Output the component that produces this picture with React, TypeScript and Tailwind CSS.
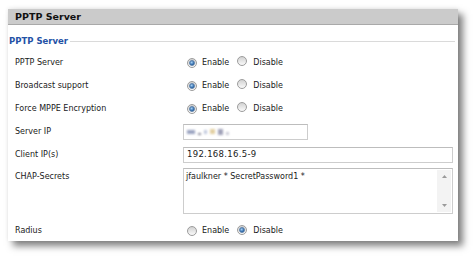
import React from "react";

const font = "font-['DejaVu_Sans',Verdana,sans-serif]";

function Radio({ checked }: { checked?: boolean }) {
  return (
    <span className="inline-flex h-[10px] w-[10px] shrink-0 items-center justify-center rounded-full border border-[#9c9c9c] bg-[linear-gradient(180deg,#d2d2d2,#fafafa)]">
      {checked && (
        <span className="h-[6px] w-[6px] rounded-full border border-[#5a7fa8] bg-[radial-gradient(circle_at_40%_35%,#a8d2f5,#1b5aa0_75%)]" />
      )}
    </span>
  );
}

function RadioPair({ enabled }: { enabled: boolean }) {
  return (
    <div className="ml-[4px] flex items-center text-[8px] leading-[10px] text-[#1a1a1a]">
      <Radio checked={enabled} />
      <span className="ml-[5px]">Enable</span>
      <span className="ml-[8px]">
        <Radio checked={!enabled} />
      </span>
      <span className="ml-[6px]">Disable</span>
    </div>
  );
}

function Row({ label, children }: { label: string; children: React.ReactNode }) {
  return (
    <div className="flex h-[23px] items-center">
      <div className="w-[168px] text-[8px] leading-[10px] text-[#1a1a1a]">{label}</div>
      {children}
    </div>
  );
}

export default function App() {
  return (
    <div className={`h-[256px] w-[474px] bg-white pl-[8px] pt-[9px] ${font}`}>
      <div className="h-[232px] w-[450px] bg-white shadow-[5px_5px_7px_rgba(0,0,0,0.5),0_-1px_4px_rgba(0,0,0,0.08)]">
        {/* title bar */}
        <div className="flex h-[16px] items-center border-b border-[#a9a9a9] bg-[#cbcbcb] pl-[7px] pt-[1px]">
          <span className="text-[9.5px] font-bold leading-none text-[#111]">PPTP Server</span>
        </div>

        {/* fieldset legend */}
        <div className="mt-[10px] flex h-[12px] items-center pl-[1px] pr-[3px]">
          <span className="text-[8.5px] font-bold leading-none text-[#2452a6]">PPTP Server</span>
          <div className="ml-[2px] h-px flex-1 bg-[#dadada]" />
        </div>

        <div className="mt-[4px] pl-[7px]">
          <Row label="PPTP Server">
            <RadioPair enabled />
          </Row>
          <Row label="Broadcast support">
            <RadioPair enabled />
          </Row>
          <Row label="Force MPPE Encryption">
            <RadioPair enabled />
          </Row>
          <Row label="Server IP">
            <div className="flex h-[16px] w-[125px] items-center gap-[3px] border border-[#cdcdcd] border-t-[#bdbdbd] bg-white pl-[3px]">
              <span className="h-[4px] w-[8px] bg-[#9aa3c0] blur-[1.3px]" />
              <span className="mt-[4px] h-[2px] w-[3px] bg-[#8a8a9a] blur-[0.8px]" />
              <span className="h-[4px] w-[3px] bg-[#c0c8dc] blur-[1px]" />
              <span className="h-[5px] w-[5px] bg-[#e2cfa2] blur-[1.3px]" />
              <span className="h-[6px] w-[5px] bg-[#a0a2b8] blur-[1.3px]" />
              <span className="mt-[3px] h-[3px] w-[3px] bg-[#c8c8d4] blur-[1px]" />
            </div>
          </Row>
          <Row label="Client IP(s)">
            <div className="flex h-[16px] w-[270px] items-center border border-[#cdcdcd] border-t-[#bdbdbd] bg-white pl-[3px] text-[8.5px] leading-none tracking-[0.3px] text-[#1a1a1a]">
              192.168.16.5-9
            </div>
          </Row>
          <div className="flex h-[49px] items-start pt-[2px]">
            <div className="w-[168px] pt-[4px] text-[8px] leading-[10px] text-[#1a1a1a]">CHAP-Secrets</div>
            <div className="flex h-[46px] w-[270px] border border-[#cdcdcd] border-t-[#bdbdbd] bg-white">
              <div className="flex-1 pl-[2px] pt-[3px] text-[8px] leading-[10px] text-[#1a1a1a]">
                jfaulkner * SecretPassword1 *
              </div>
              <div className="my-px mr-px flex w-[14px] flex-col items-center justify-between bg-[#f3f3f3] py-[5px]">
                <svg width="5" height="3" viewBox="0 0 5 3">
                  <path d="M0 3 L2.5 0 L5 3 Z" fill="#9a9a9a" />
                </svg>
                <svg width="5" height="3" viewBox="0 0 5 3">
                  <path d="M0 0 L2.5 3 L5 0 Z" fill="#9a9a9a" />
                </svg>
              </div>
            </div>
          </div>
          <div className="mt-[4px]">
            <Row label="Radius">
              <RadioPair enabled={false} />
            </Row>
          </div>
        </div>
      </div>
    </div>
  );
}
